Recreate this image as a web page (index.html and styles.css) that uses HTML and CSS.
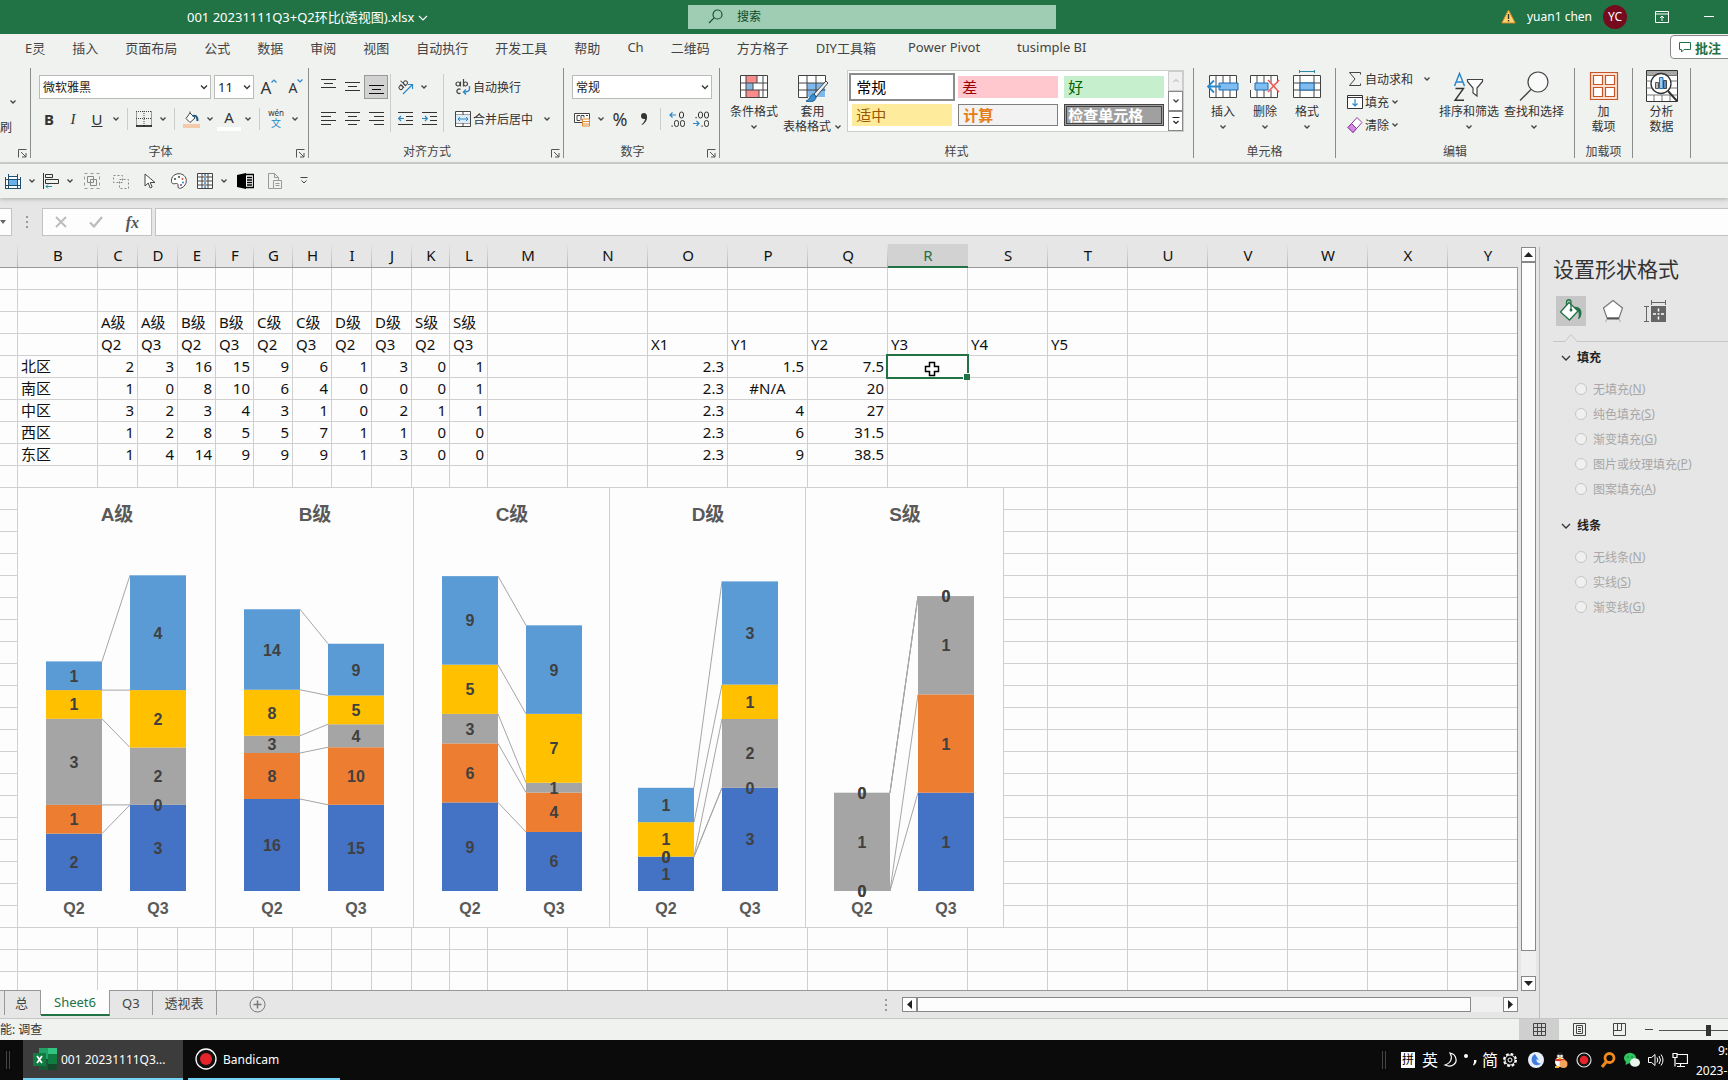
FILE: index.html
```html
<!DOCTYPE html>
<html lang="zh-CN">
<head>
    <meta charset="UTF-8">
    <meta name="viewport" content="width=device-width, initial-scale=1.0">
    <title>001 20231111Q3+Q2环比(透视图).xlsx</title>
    <link rel="stylesheet" href="styles.css">
</head>
<body>

    <svg class="defs" width="0" height="0">
        <symbol id="chev" viewBox="0 0 8 8"><path d="M1.5 2.5L4 5l2.5-2.5" fill="none" stroke="#444" stroke-width="1.3"/></symbol>
        <symbol id="launch" viewBox="0 0 9 9"><path d="M.5 8.500V.5H8.500M3 3l5 5M8 4v4H4" fill="none" stroke="#555"/></symbol>
    </svg>

    <header class="titlebar">
        <button class="doc-name">001 20231111Q3+Q2环比(透视图).xlsx
            <svg width="10" height="8" viewBox="0 0 10 8"><path d="M1 2l4 4 4-4" fill="none" stroke="#fff" stroke-width="1.200"/></svg>
        </button>
        <label class="search">
            <svg width="15" height="15" viewBox="0 0 15 15"><g fill="none" stroke="#14532f" stroke-width="1.200"><circle cx="9.500" cy="5.500" r="4.500"/><path d="M6.300 8.700L1 14"/></g></svg>
            <input type="text" placeholder="搜索" aria-label="搜索">
        </label>
        <div class="account">
            <svg width="15" height="15" viewBox="0 0 15 15"><path d="M7.500 1L14.200 14H.8z" fill="#ffd56b" stroke="#c8882b"/><path d="M7.500 5v5M7.500 11v1.500" stroke="#333" stroke-width="1.400"/></svg>
            <span class="user">yuan1 chen</span>
            <span class="avatar">YC</span>
            <button aria-label="功能区显示选项"><svg width="14" height="12" viewBox="0 0 14 12"><path d="M.5.5h13v11H.5zM.5 3h13M7 10V5M5 7l2-2 2 2" fill="none" stroke="#fff"/></svg></button>
            <button aria-label="最小化"><svg width="10" height="12" viewBox="0 0 10 12"><path d="M0 5.500h10" stroke="#fff"/></svg></button>
        </div>
    </header>

    <nav class="tabs">
        <button>E灵</button>
        <button>插入</button>
        <button>页面布局</button>
        <button>公式</button>
        <button>数据</button>
        <button>审阅</button>
        <button>视图</button>
        <button>自动执行</button>
        <button>开发工具</button>
        <button>帮助</button>
        <button>Ch</button>
        <button>二维码</button>
        <button>方方格子</button>
        <button>DIY工具箱</button>
        <button class="latin">Power Pivot</button>
        <button class="latin">tusimple BI</button>
        <button class="comments">
            <svg width="12" height="12" viewBox="0 0 12 12"><path d="M.5 1.500h11v7H5L2.500 11V8.500h-2z" fill="none" stroke="#217346"/></svg>批注
        </button>
    </nav>

    <section class="ribbon">
        <div class="group clipboard">
            <div class="content">
                <svg class="chev" width="8" height="8"><use href="#chev"/></svg>
                <span>刷</span>
            </div>
            <div class="label">&nbsp;</div>
            <button class="launch" aria-label="剪贴板"><svg width="9" height="9"><use href="#launch"/></svg></button>
        </div>

        <div class="group">
            <div class="content rows">
                <div class="row combos">
                    <select class="font-name" aria-label="字体"><option>微软雅黑</option></select>
                    <select class="font-size" aria-label="字号"><option>11</option></select>
                    <button class="ib grow">A<svg width="6" height="4" viewBox="0 0 6 4"><path d="M.5 3.500L3 1l2.500 2.500" fill="none" stroke="#2b88c8" stroke-width="1.200"/></svg></button>
                    <button class="ib grow small">A<svg width="6" height="4" viewBox="0 0 6 4"><path d="M.5.5L3 3 5.500.5" fill="none" stroke="#2b88c8" stroke-width="1.200"/></svg></button>
                </div>
                <div class="row icons">
                    <button class="ib"><b>B</b></button>
                    <button class="ib"><i>I</i></button>
                    <button class="ib"><u>U</u></button>
                    <button class="cv" aria-label="下划线选项"><svg width="8" height="8"><use href="#chev"/></svg></button>
                    <span class="sep"></span>
                    <button class="ib" aria-label="边框"><svg width="16" height="16" viewBox="0 0 16 16"><path d="M.5.5V15M15.500.5V15M0 .5h16M8 0v15M0 7.500h16" fill="none" stroke="#444" stroke-dasharray="1 1"/><path d="M0 15h16" stroke="#000" stroke-width="1.500"/></svg></button>
                    <button class="cv" aria-label="边框选项"><svg width="8" height="8"><use href="#chev"/></svg></button>
                    <span class="sep"></span>
                    <button class="ib" aria-label="填充颜色"><svg width="17" height="17" viewBox="0 0 17 17"><path d="M0 13h17v4H0z" fill="#f4cbaa"/><path d="M7 2l5 5-5 4.500-4-4zM7 2V.5" fill="#fff" stroke="#444"/><path d="M9.500 5c3-1 5 0 5 5" fill="none" stroke="#1e5c85" stroke-width="2"/></svg></button>
                    <button class="cv" aria-label="填充选项"><svg width="8" height="8"><use href="#chev"/></svg></button>
                    <button class="ib font-color">A</button>
                    <button class="cv" aria-label="字体颜色选项"><svg width="8" height="8"><use href="#chev"/></svg></button>
                    <span class="sep"></span>
                    <button class="ib pinyin"><span>wén</span><span class="wen">文</span></button>
                    <button class="cv" aria-label="拼音选项"><svg width="8" height="8"><use href="#chev"/></svg></button>
                </div>
            </div>
            <div class="label with-launch">字体</div>
            <button class="launch" aria-label="字体设置"><svg width="9" height="9"><use href="#launch"/></svg></button>
        </div>

        <div class="group">
            <div class="content align">
                <div class="rows">
                    <div class="row">
                        <button class="ib" aria-label="顶端对齐"><svg width="15" height="16" viewBox="0 0 15 16"><path d="M0 .5h15M3 4.500h9M0 8.500h15" stroke="#333"/></svg></button>
                        <button class="ib" aria-label="垂直居中"><svg width="15" height="16" viewBox="0 0 15 16"><path d="M0 3.500h15M3 7.500h9M0 11.500h15" stroke="#333"/></svg></button>
                        <button class="ib on" aria-label="底端对齐"><svg width="15" height="16" viewBox="0 0 15 16"><path d="M0 6.500h15M3 10.500h9M0 14.500h15" stroke="#111"/></svg></button>
                    </div>
                    <div class="row">
                        <button class="ib" aria-label="左对齐"><svg width="15" height="14" viewBox="0 0 15 14"><path d="M0 .5h15M0 4.500h10M0 8.500h15M0 12.500h10" stroke="#333"/></svg></button>
                        <button class="ib" aria-label="居中"><svg width="15" height="14" viewBox="0 0 15 14"><path d="M0 .5h15M3 4.500h9M0 8.500h15M3 12.500h9" stroke="#333"/></svg></button>
                        <button class="ib" aria-label="右对齐"><svg width="15" height="14" viewBox="0 0 15 14"><path d="M0 .5h15M5 4.500h10M0 8.500h15M5 12.500h10" stroke="#333"/></svg></button>
                    </div>
                </div>
                <span class="sep"></span>
                <div class="rows">
                    <div class="row">
                        <button class="ib" aria-label="方向"><svg width="17" height="16" viewBox="0 0 17 16"><g fill="none" stroke="#444" transform="rotate(-45 5 6)"><circle cx="2.500" cy="7" r="2"/><path d="M4.500 4.500v5M7 2v7.500"/><circle cx="9" cy="7" r="2"/></g><path d="M6 15L15 6M11 5.500h4.500V10" fill="none" stroke="#2b88c8" stroke-width="1.200"/></svg></button>
                        <button class="cv" aria-label="方向选项"><svg width="8" height="8"><use href="#chev"/></svg></button>
                    </div>
                    <div class="row">
                        <button class="ib" aria-label="减少缩进量"><svg width="15" height="14" viewBox="0 0 15 14"><path d="M0 .5h15M8 4.500h7M8 8.500h7M0 12.500h15" stroke="#333"/><path d="M6 6.500H1M3 4L.7 6.500 3 9" fill="none" stroke="#2b88c8" stroke-width="1.200"/></svg></button>
                        <button class="ib" aria-label="增加缩进量"><svg width="15" height="14" viewBox="0 0 15 14"><path d="M0 .5h15M8 4.500h7M8 8.500h7M0 12.500h15" stroke="#333"/><path d="M0 6.500h5M3 4l2.300 2.500L3 9" fill="none" stroke="#2b88c8" stroke-width="1.200"/></svg></button>
                    </div>
                </div>
                <span class="sep"></span>
                <div class="rows wrap-col">
                    <button class="row text-btn"><svg width="16" height="16" viewBox="0 0 16 16"><g fill="none" stroke="#444" stroke-width="1.200"><circle cx="3" cy="5" r="2"/><path d="M5.500 2.500v5M8.500 0v7.500"/><circle cx="10.500" cy="5" r="2"/><path d="M5.500 10.500a2.200 2.200 0 1 0 0 3.500"/></g><path d="M14.500 7v3c0 2-1 3-6 3M11 10.500L8.500 13l2.500 2.500" fill="none" stroke="#2b88c8" stroke-width="1.400"/></svg>自动换行</button>
                    <button class="row text-btn"><svg width="16" height="16" viewBox="0 0 16 16"><path d="M.5.5h15v15H.5zM.5 4h15M.5 12h15M8 .5V4M8 12v3.500" fill="#fff" stroke="#444"/><path d="M1 4h14v8H1z" fill="#dcecf8"/><path d="M3 8h10M5 6L3 8l2 2M11 6l2 2-2 2" fill="none" stroke="#2b88c8"/></svg>合并后居中<svg class="far" width="8" height="8"><use href="#chev"/></svg></button>
                </div>
            </div>
            <div class="label with-launch">对齐方式</div>
            <button class="launch" aria-label="对齐设置"><svg width="9" height="9"><use href="#launch"/></svg></button>
        </div>

        <div class="group">
            <div class="content rows">
                <div class="row combos">
                    <select class="number-format" aria-label="数字格式"><option>常规</option></select>
                </div>
                <div class="row icons">
                    <button class="ib" aria-label="会计数字格式"><svg width="17" height="16" viewBox="0 0 17 16"><path d="M.5 2.500h15v9H.5z" fill="#fff" stroke="#444"/><path d="M6 4.500H3v5h3M7 9.500v-5h3v2M12 4.500h2" fill="none" stroke="#444"/><path d="M8.500 8h7v7h-7z" fill="#fff" stroke="#e08a2c"/><path d="M8.500 10.500h7M8.500 13h7" stroke="#e08a2c"/></svg></button>
                    <button class="cv" aria-label="会计选项"><svg width="8" height="8"><use href="#chev"/></svg></button>
                    <button class="ib percent">%</button>
                    <button class="ib" aria-label="千位分隔样式"><svg width="8" height="14" viewBox="0 0 8 14"><path d="M4 1a3 3 0 1 0 0 6c.5 0 .9 0 1.200-.2C4.800 9 3.500 11 1.500 12.500L2 13C5.500 11 7.500 8 7 4 6.800 2 5.500 1 4 1z" fill="#333"/></svg></button>
                    <span class="sep"></span>
                    <button class="ib" aria-label="增加小数位数"><svg width="16" height="16" viewBox="0 0 16 16"><path d="M7 4H1M3.500 1.500L1 4l2.500 2.500" fill="none" stroke="#2b88c8" stroke-width="1.200"/><g fill="none" stroke="#333"><rect x="10.500" y="1" width="4" height="6" rx="2"/><rect x="5.500" y="9.500" width="4" height="6" rx="2"/><rect x="11.500" y="9.500" width="4" height="6" rx="2"/></g><path d="M2.500 14.500h1.200v1.200H2.500z" fill="#333"/></svg></button>
                    <button class="ib" aria-label="减少小数位数"><svg width="16" height="16" viewBox="0 0 16 16"><path d="M0 12.500h6M3.500 10L6 12.500 3.500 15" fill="none" stroke="#2b88c8" stroke-width="1.200"/><g fill="none" stroke="#333"><rect x="5.500" y="1" width="4" height="6" rx="2"/><rect x="11.500" y="1" width="4" height="6" rx="2"/><rect x="11.500" y="9.500" width="4" height="6" rx="2"/></g><path d="M2.500 6h1.200v1.200H2.500zM8.500 14.500h1.200v1.200H8.500z" fill="#333"/></svg></button>
                </div>
            </div>
            <div class="label with-launch">数字</div>
            <button class="launch" aria-label="数字设置"><svg width="9" height="9"><use href="#launch"/></svg></button>
        </div>

        <div class="group">
            <div class="content styles">
                <button class="big">
                    <svg width="32" height="32" viewBox="0 0 32 32"><path d="M2.500 5.500h27v22h-27z" fill="#fff"/><path d="M8 6h11v7H8zM8 20h13v7H8z" fill="#f98b8b"/><path d="M8 13h7v7H8z" fill="#87b4df"/><path d="M2.500 5.500h27v22h-27zM2.500 13h27M2.500 20h27M8 5.500v22M19 5.500V13M15 13v7M21 20v7.500M25 5.500v22" fill="none" stroke="#444"/></svg>
                    <span>条件格式</span>
                    <svg width="8" height="8"><use href="#chev"/></svg>
                </button>
                <button class="big">
                    <svg width="32" height="32" viewBox="0 0 32 32"><path d="M1.500 5.500h27v22h-27z" fill="#fff"/><path d="M10 13h18v14H10z" fill="#7fb8ec"/><path d="M28.500 12V5.500h-27v22H11M1.500 13h27M1.500 20h27M10 5.500v22M19 5.500v22" fill="none" stroke="#444"/><path d="M29 11L17 24l2 3 12-14z" fill="#eee" stroke="#444"/><path d="M17 24c-4 0-3 5-8 7 5 2 10 0 10-4z" fill="#3c8ed0" stroke="#1e5c85"/></svg>
                    <span>套用</span>
                    <span>表格格式 <svg width="8" height="8"><use href="#chev"/></svg></span>
                </button>
                <div class="gallery">
                    <div class="swatches">
                        <button class="normal">常规</button>
                        <button class="bad">差</button>
                        <button class="good">好</button>
                        <button class="neutral">适中</button>
                        <button class="calc">计算</button>
                        <button class="check">检查单元格</button>
                    </div>
                    <div class="scroller">
                        <button class="off" aria-label="上一行"><svg width="8" height="8" viewBox="0 0 8 8"><path d="M1.500 5L4 2.500 6.500 5" fill="none" stroke="#aaa"/></svg></button>
                        <button aria-label="下一行"><svg width="8" height="8"><use href="#chev"/></svg></button>
                        <button aria-label="其他"><svg width="8" height="10" viewBox="0 0 8 10"><path d="M.5 1.500h7M1.500 5L4 7.500 6.500 5" fill="none" stroke="#222" stroke-width="1.200"/></svg></button>
                    </div>
                </div>
            </div>
            <div class="label">样式</div>
        </div>

        <div class="group">
            <div class="content cells">
                <button class="big">
                    <svg width="32" height="32" viewBox="0 0 32 32"><path d="M2.500 5.500h27v22h-27z" fill="#fff"/><path d="M2.500 5.500h27v22h-27zM9 5.500v22M16 5.500v22M23 5.500v22" fill="none" stroke="#444"/><path d="M12 13h19v7H12z" fill="#7fbcf0" stroke="#1c6db5"/><path d="M14 16.500H1M7 10.500l-6 6 6 6" fill="none" stroke="#2b88c8" stroke-width="1.800"/></svg>
                    <span>插入</span>
                    <svg width="8" height="8"><use href="#chev"/></svg>
                </button>
                <button class="big">
                    <svg width="32" height="32" viewBox="0 0 32 32"><path d="M1.500 5.500h27v22h-27z" fill="#fff"/><path d="M1.500 5.500h27v22h-27zM8 5.500v22M15 5.500v22M22 5.500v22" fill="none" stroke="#444"/><path d="M1 13h28v7H1z" fill="#f0f2ef"/><path d="M6 13h13v7H6z" fill="#7fbcf0" stroke="#1c6db5"/><path d="M19 10l11 12M30 10L19 22" stroke="#f05a5a" stroke-width="1.500"/></svg>
                    <span>删除</span>
                    <svg width="8" height="8"><use href="#chev"/></svg>
                </button>
                <button class="big">
                    <svg width="32" height="32" viewBox="0 0 32 32"><path d="M2.500 5.500h27v22h-27z" fill="#fff"/><path d="M2.500 5.500h27v22h-27zM2.500 13h27M2.500 20h27M9 5.500v22M23 5.500v22" fill="none" stroke="#444"/><path d="M9 13h14v7H9z" fill="#7fbcf0" stroke="#1c6db5"/><path d="M8 1.500h16M8.500 0v3M23.500 0v3" stroke="#2b88a8"/></svg>
                    <span>格式</span>
                    <svg width="8" height="8"><use href="#chev"/></svg>
                </button>
            </div>
            <div class="label">单元格</div>
        </div>

        <div class="group">
            <div class="content edit">
                <div class="stack">
                    <button class="text-btn"><svg width="16" height="16" viewBox="0 0 16 16"><path d="M13.500 3.500V1.500H2.500L8 8l-5.500 6.500h11v-2" fill="none" stroke="#444"/></svg>自动求和<svg class="far" width="8" height="8"><use href="#chev"/></svg></button>
                    <button class="text-btn"><svg width="16" height="16" viewBox="0 0 16 16"><path d="M.5 1.500h15v13H.5z" fill="#fff" stroke="#333"/><path d="M.5 3.500h15" stroke="#333"/><path d="M8 5v7M5.500 9.500L8 12l2.500-2.500" fill="none" stroke="#2b88c8" stroke-width="1.200"/></svg>填充<svg width="8" height="8"><use href="#chev"/></svg></button>
                    <button class="text-btn"><svg width="16" height="16" viewBox="0 0 16 16"><path d="M10 .5L15 5.500 6 15.500 1 10.500z" fill="#fff" stroke="#8d3a9c"/><path d="M4.500 6.500L9.500 11.500 6 15.500 1 10.500z" fill="#d48ade" stroke="#8d3a9c"/></svg>清除<svg width="8" height="8"><use href="#chev"/></svg></button>
                </div>
                <button class="big">
                    <svg width="32" height="32" viewBox="0 0 32 32"><path d="M1.500 16L6.500 3.500 11.500 16M3 12h7" fill="none" stroke="#2b88c8" stroke-width="1.500"/><path d="M2.500 18.500h8L2 30.300h9" fill="none" stroke="#333" stroke-width="1.400"/><path d="M14.500 9.500h15v2L24 18v8l-4-3v-5l-5.500-6.500z" fill="#fff" stroke="#444" stroke-width="1.200"/></svg>
                    <span>排序和筛选</span>
                    <svg width="8" height="8"><use href="#chev"/></svg>
                </button>
                <button class="big">
                    <svg width="32" height="32" viewBox="0 0 32 32"><circle cx="20" cy="12" r="10" fill="#fafafa" stroke="#444" stroke-width="1.200"/><path d="M13 19.500L2 30.500" stroke="#444" stroke-width="1.300"/></svg>
                    <span>查找和选择</span>
                    <svg width="8" height="8"><use href="#chev"/></svg>
                </button>
            </div>
            <div class="label">编辑</div>
        </div>

        <div class="group">
            <div class="content single">
                <button class="big">
                    <svg width="32" height="32" viewBox="0 0 32 32"><path d="M2.500 2.500h27v27h-27z" fill="#fbe0d0" stroke="#c4562a" stroke-width="1.200"/><path d="M5.500 5.500h9v9h-9zM17.500 5.500h9v9h-9zM5.500 17.500h9v9h-9zM17.500 17.500h9v9h-9z" fill="#fff" stroke="#c4562a" stroke-width="1.200"/></svg>
                    <span>加</span>
                    <span>载项</span>
                </button>
            </div>
            <div class="label">加载项</div>
        </div>

        <div class="group">
            <div class="content single">
                <button class="big">
                    <svg width="32" height="32" viewBox="0 0 32 32"><path d="M.5.5h31v31H.5z" fill="#fff" stroke="#333"/><path d="M1 1h30v4H1z" fill="#a8a8a8"/><path d="M.5 5.500h31M.5 11h31M.5 18h31M.5 25h31M8 25v6M16 25v6M24 25v6" stroke="#777"/><circle cx="15" cy="13.500" r="10" fill="#fff" stroke="#333" stroke-width="1.300"/><path d="M22 21l9 10" stroke="#333" stroke-width="2"/><path d="M9.500 12.500h3v6h-3z" fill="#bbb" stroke="#555"/><path d="M13.500 7.500h3.500v11h-3.500z" fill="#9cc8ee" stroke="#1c6db5"/><path d="M17.500 10.500h3v8h-3z" fill="#5a8fc0" stroke="#444"/></svg>
                    <span>分析</span>
                    <span>数据</span>
                </button>
            </div>
            <div class="label">&nbsp;</div>
        </div>
    </section>

    <div class="quickbar">
        <button class="ib" aria-label="冻结窗格"><svg width="16" height="16" viewBox="0 0 16 16"><path d="M.5 3.500h15v12H.5z" fill="#fff"/><path d="M4 7h8v5H4z" fill="#6bb0ee"/><path d="M3.500 1v15M12.500 1v15M0 6.500h16M0 12.500h16M.5 4v12M15.500 4v12M3 3.500h10M0 15.500h16" fill="none" stroke="#1e4f70"/></svg></button>
        <button class="cv" aria-label="冻结选项"><svg width="8" height="8"><use href="#chev"/></svg></button>
        <button class="ib" aria-label="对齐对象"><svg width="16" height="16" viewBox="0 0 16 16"><path d="M.5 0v16M2.500 1.500h7v3h-7zM2.500 6.500h13v4h-13z" fill="none" stroke="#333"/><path d="M9 13.500H3M5 11.500l-2 2 2 2" fill="none" stroke="#2b88a8"/></svg></button>
        <button class="cv" aria-label="对齐选项"><svg width="8" height="8"><use href="#chev"/></svg></button>
        <button class="ib wide" aria-label="组合"><svg width="16" height="16" viewBox="0 0 16 16"><path d="M.5.500h15v15H.5z" fill="none" stroke="#999" stroke-dasharray="3 3"/><path d="M3.500 3.500h6v6h-6zM6.500 6.500h6v6h-6z" fill="none" stroke="#888"/></svg></button>
        <button class="ib wide" aria-label="取消组合"><svg width="16" height="16" viewBox="0 0 16 16"><path d="M.5 2.500h9v7h-9zM6.500 6.500h9v9h-9z" fill="none" stroke="#888" stroke-dasharray="2 2"/></svg></button>
        <button class="ib wide" aria-label="选择对象"><svg width="12" height="16" viewBox="0 0 12 16"><path d="M1 1v12l3.200-3 2 5 2-1-2-4.500H11z" fill="#fff" stroke="#444"/></svg></button>
        <button class="ib wide" aria-label="主题颜色"><svg width="17" height="16" viewBox="0 0 17 16"><path d="M9 .7c4 0 7.300 3 7.300 7S13 15.300 9.500 15.300c-2 0-1.200-2-1.500-3.500C7.500 9 5 11.500 2.500 10.500.5 9.500.700.7 9 .7z" fill="#fff" stroke="#444"/><g fill="#444"><circle cx="5" cy="6" r="1"/><circle cx="9" cy="4" r="1" /><circle cx="12.500" cy="6" r="1" fill="#c4562a"/><circle cx="13" cy="9.500" r="1" fill="#2b88c8"/><circle cx="11" cy="12" r="1" fill="#8d3a9c"/></g></svg></button>
        <button class="ib" aria-label="表格"><svg width="16" height="16" viewBox="0 0 16 16"><path d="M.5.500h15v15H.5zM.5 4h15M.5 8h15M.5 12h15M5 .5v15M11 .5v15" fill="#fff" stroke="#444"/><path d="M7 2h2M7 6h2M7 10h2M7 14h2" stroke="#2b88c8" stroke-width="1.500"/></svg></button>
        <button class="cv" aria-label="表格选项"><svg width="8" height="8"><use href="#chev"/></svg></button>
        <button class="ib wide" aria-label="照相机"><svg width="17" height="16" viewBox="0 0 17 16"><path d="M9 1h8v14H9z" fill="#fff"/><path d="M0 2l9-2v16l-9-2z"/><path d="M9 1.500h7.500v13H9M10 4.500h5M10 7h5M10 9.500h5M10 12h5" fill="none" stroke="#000" stroke-width="1.300"/></svg></button>
        <button class="ib wide" aria-label="粘贴"><svg width="16" height="16" viewBox="0 0 16 16"><path d="M6 15.500H1.500V.5h6l4 4V7M7.500.5v4h4M6.500 7.500h8v8h-8zM8.500 10.500h4M8.500 12.500h4" fill="none" stroke="#999"/></svg></button>
        <button class="ib wide" aria-label="自定义工具栏"><svg width="8" height="10" viewBox="0 0 8 10"><path d="M.5 1.500h7M1.500 4.500L4 7l2.500-2.500" fill="none" stroke="#444"/></svg></button>
    </div>

    <div class="formula-bar">
        <button class="name-box" aria-label="名称框"><svg width="6" height="4" viewBox="0 0 6 4"><path d="M0 0h6L3 4z" fill="#666"/></svg></button>
        <span class="grip"></span>
        <div class="fx">
            <svg width="12" height="12" viewBox="0 0 12 12"><path d="M1 1l10 10M11 1L1 11" stroke="#bbb" stroke-width="1.800"/></svg>
            <svg width="14" height="12" viewBox="0 0 14 12"><path d="M1 6.500L5 10.500 13 1" fill="none" stroke="#bbb" stroke-width="2.200"/></svg>
            <button><i>fx</i></button>
        </div>
        <input type="text" aria-label="编辑栏">
    </div>

    <main class="work">
        <div class="book">
            <div class="view">
                <div class="sheet">
                    <table id="grid"></table>
                    <div class="charts" id="charts"></div>
                </div>
                <div class="vscroll">
                    <button aria-label="向上滚动"><svg width="9" height="5" viewBox="0 0 9 5"><path d="M4.500 0L9 5H0z" fill="#222"/></svg></button>
                    <div class="thumb"></div>
                    <div class="track"></div>
                    <button aria-label="向下滚动"><svg width="9" height="5" viewBox="0 0 9 5"><path d="M4.500 5L9 0H0z" fill="#222"/></svg></button>
                </div>
            </div>
            <div class="sheet-bar">
                <button class="st first">总</button>
                <button class="st active">Sheet6</button>
                <button class="st">Q3</button>
                <button class="st">透视表</button>
                <button class="add" aria-label="新工作表"><svg width="17" height="17" viewBox="0 0 17 17"><g fill="none" stroke="#777"><circle cx="8.500" cy="8.500" r="7.500"/><path d="M8.500 4.500v8M4.500 8.500h8" stroke-width="1.500"/></g></svg></button>
                <span class="grip"></span>
                <div class="hscroll">
                    <button aria-label="向左滚动"><svg width="5" height="9" viewBox="0 0 5 9"><path d="M0 4.500L5 0v9z" fill="#222"/></svg></button>
                    <div class="thumb"></div>
                    <div class="track"></div>
                    <button aria-label="向右滚动"><svg width="5" height="9" viewBox="0 0 5 9"><path d="M5 4.500L0 0v9z" fill="#222"/></svg></button>
                </div>
            </div>
        </div>

        <aside class="pane">
            <h2>设置形状格式</h2>
            <div class="pane-tabs">
                <button class="on" aria-label="填充与线条"><svg width="24" height="24" viewBox="0 0 24 24"><path d="M10 3.500l9 8.500-8.500 9L1.500 13z" fill="#fff" stroke="#217346" stroke-width="1.300"/><path d="M7.500 6V3c0-3 4.500-3 4.500 0v7" fill="none" stroke="#217346" stroke-width="1.300"/><circle cx="12" cy="11" r="1.500" fill="#217346"/><path d="M15 8c5-1 9 3 7 9-.5 2-2 3-3 3 1-3 1-6 0-8z" fill="#217346"/></svg></button>
                <button aria-label="效果"><svg width="22" height="24" viewBox="0 0 22 24"><path d="M11 1.500l9.500 7.500L17 19H5L1.500 9z" fill="#fff" stroke="#777" stroke-width="1.200"/><path d="M5 19.500h12" stroke="#555" stroke-width="2"/><path d="M5 20l-1.500 3M17 20l1.500 3" stroke="#aaa"/></svg></button>
                <button aria-label="大小与属性"><svg width="22" height="22" viewBox="0 0 22 22"><path d="M7 6h15v16H7z" fill="#666"/><path d="M14.500 8.500v3M14.500 16.500v3M9 14h3M17 14h3M13.500 14h2" stroke="#fff" stroke-width="1.500"/><path d="M7.500 0v5M21.500 0v5M7.500 2.500h14M0 6.500h5M0 21.500h5M2.500 6.500v15" stroke="#666"/></svg></button>
            </div>
            <svg class="notch" width="100%" height="10"><path d="M0 9.500h12l6-7 6 7h400" fill="none" stroke="#c6c6c6"/></svg>
            <fieldset>
                <legend><svg width="10" height="8" viewBox="0 0 10 8"><path d="M1 2l4 4 4-4" fill="none" stroke="#333" stroke-width="1.300"/></svg>填充</legend>
                <label><input type="radio" name="fill" disabled>无填充(<u>N</u>)</label>
                <label><input type="radio" name="fill" disabled>纯色填充(<u>S</u>)</label>
                <label><input type="radio" name="fill" disabled>渐变填充(<u>G</u>)</label>
                <label><input type="radio" name="fill" disabled>图片或纹理填充(<u>P</u>)</label>
                <label><input type="radio" name="fill" disabled>图案填充(<u>A</u>)</label>
            </fieldset>
            <fieldset>
                <legend><svg width="10" height="8" viewBox="0 0 10 8"><path d="M1 2l4 4 4-4" fill="none" stroke="#333" stroke-width="1.300"/></svg>线条</legend>
                <label><input type="radio" name="line" disabled>无线条(<u>N</u>)</label>
                <label><input type="radio" name="line" disabled>实线(<u>S</u>)</label>
                <label><input type="radio" name="line" disabled>渐变线(<u>G</u>)</label>
            </fieldset>
        </aside>
    </main>

    <footer class="status">
        <span class="access">能: 调查</span>
        <button class="on" aria-label="普通"><svg width="13" height="13" viewBox="0 0 13 13"><path d="M.5.500h12v12H.5zM.5 4.500h12M.5 8.500h12M4.500.5v12M8.500.5v12" fill="none" stroke="#444"/></svg></button>
        <button aria-label="页面布局"><svg width="13" height="13" viewBox="0 0 13 13"><path d="M.5.500h12v12H.5zM3.500 2.500h6v8h-6zM5 4.500h3M5 6.500h3M5 8.500h3" fill="none" stroke="#444"/></svg></button>
        <button aria-label="分页预览"><svg width="13" height="13" viewBox="0 0 13 13"><path d="M.5.500h12v12H.5zM.5 7.500h8v-7M4.500.5v7" fill="none" stroke="#444"/></svg></button>
        <div class="zoom">
            <svg width="90" height="14" viewBox="0 0 90 14"><path d="M6 6.500h8" stroke="#444"/><path d="M20 7.500h70" stroke="#555"/><path d="M67 2h5v11h-5z" fill="#333"/></svg>
        </div>
    </footer>

    <div class="taskbar">
        <span class="bars"></span>
        <button class="app active">
            <svg width="24" height="22" viewBox="0 0 24 22"><path d="M6 0h9v11H6z" fill="#21a366"/><path d="M15 0h9v6h-9z" fill="#33c481"/><path d="M15 6h9v10h-9z" fill="#107c41"/><path d="M6 11h9v11H6z" fill="#185c37"/><path d="M15 16h9v6h-9z" fill="#134a2c"/><path d="M0 5h13v13H0z" fill="#107c41"/><path d="M4 8l5 7M9 8l-5 7" stroke="#fff" stroke-width="1.800"/></svg>
            001 20231111Q3...
        </button>
        <button class="app">
            <svg width="22" height="22" viewBox="0 0 22 22"><circle cx="11" cy="11" r="10" fill="#111" stroke="#fff" stroke-width="1.300"/><circle cx="11" cy="11" r="6" fill="#e5232b"/></svg>
            Bandicam
        </button>
        <div class="tray">
            <div class="input-tools">
                <span class="bars"></span>
                <span class="ime box">拼</span>
                <span class="ime">英</span>
                <svg viewBox="0 0 16 16"><path d="M8 1c3 5 1 10-5 12 6 3 12-1 11-6-.5-3-3-5.500-6-6z" fill="none" stroke="#fff" stroke-width="1.200"/></svg>
                <svg viewBox="0 0 16 16"><circle cx="4" cy="4" r="2" fill="#fff"/><path d="M12 8h2.500c0 3-1 4-3 5.500L11 13c1-1.500 1-3 1-5z" fill="#fff"/></svg>
                <span class="ime">简</span>
                <svg viewBox="0 0 16 16"><circle cx="8" cy="8" r="6" fill="none" stroke="#fff" stroke-width="2" stroke-dasharray="2.700 2"/><circle cx="8" cy="8" r="5" fill="#0b0b0b" stroke="#fff"/><circle cx="8" cy="8" r="2" fill="none" stroke="#fff"/></svg>
            </div>
            <svg viewBox="0 0 16 16"><circle cx="8" cy="8" r="8" fill="#e9f0fb"/><path d="M7 2C3 4 3 9 5 11.500c2 2.500 6 2 8 0-3 0-5-2-4.500-4.500L11 8.500z" fill="#3f7fe0"/></svg>
            <svg viewBox="0 0 16 16"><ellipse cx="8" cy="5" rx="4" ry="4.500" fill="#222"/><ellipse cx="8" cy="10" rx="5" ry="5" fill="#fff"/><circle cx="6.500" cy="4" r="1.300" fill="#fff"/><circle cx="9.500" cy="4" r="1.300" fill="#fff"/><path d="M3 7h10v2.500L3 9z" fill="#d93a2b"/><path d="M5 5.500h6L8 7.500z" fill="#f6b32a"/><circle cx="11.500" cy="12" r="4" fill="#f0a45c"/><path d="M3 14h4v2H3z" fill="#f6b32a"/></svg>
            <svg viewBox="0 0 16 16"><circle cx="8" cy="8" r="7" fill="#111" stroke="#ddd" stroke-width="1.200"/><circle cx="8" cy="8" r="4.300" fill="#e5232b"/></svg>
            <svg viewBox="0 0 16 16"><circle cx="9.500" cy="6" r="4.500" fill="none" stroke="#f08a1c" stroke-width="2.800"/><path d="M6.500 9.500L2 15" stroke="#f08a1c" stroke-width="3"/></svg>
            <svg viewBox="0 0 16 16"><ellipse cx="6" cy="6" rx="6" ry="5.200" fill="#2fc45e"/><path d="M2 9l-.5 4 4-2z" fill="#2fc45e"/><ellipse cx="11" cy="10.500" rx="5" ry="4.300" fill="#e8f5ea"/><g fill="#1c6d38"><circle cx="4" cy="5" r=".8"/><circle cx="8" cy="5" r=".8"/></g></svg>
            <svg viewBox="0 0 16 16"><path d="M.5 5.500h3L7 2.500v11l-3.500-3h-3zM9 5.500q1.500 2.500 0 5M11 4q3 4 0 8M13 2.500q4 5.500 0 11" fill="none" stroke="#fff"/></svg>
            <svg viewBox="0 0 16 16"><path d="M5 2.500h10.500v9H4M1 1.500h4v4H1zM3 5.500v9M8.500 11.500v3M5 14.500h8" fill="none" stroke="#fff" stroke-width="1.200"/></svg>
            <div class="clock"><span>9:</span><span>2023-</span></div>
        </div>
    </div>

    <script src="script.js"></script>
</body>
</html>
```
FILE: styles.css
```css
* {
    margin: 0;
    padding: 0;
    box-sizing: border-box;
}

body {
    font-family: "Noto Sans", "Noto Sans CJK SC", sans-serif;
    font-size: 12px;
    color: #333;
    background: #e6e6e6;
    height: 100vh;
    display: flex;
    flex-direction: column;
    overflow: hidden;
}

button {
    font: inherit;
    color: inherit;
    background: none;
    border: none;
    white-space: nowrap;
}

svg {
    flex: none;
}

.defs {
    position: absolute;
}

/* title bar */
.titlebar {
    flex: none;
    height: 34px;
    padding-bottom: 1px;
    background: #217346;
    color: #fff;
    display: grid;
    grid-template-columns: 688px minmax(200px, 368px) 1fr;
    align-items: center;
}

.doc-name {
    justify-self: start;
    margin-left: 187px;
    font-size: 13px;
    line-height: 20px;
}

.search {
    height: 24px;
    background: #9fcdb3;
    display: flex;
    align-items: center;
    gap: 14px;
    padding-left: 20px;
}

.search input {
    flex: 1;
    min-width: 0;
    background: none;
    border: none;
    font: inherit;
}

.search input::placeholder {
    color: #0e4a2a;
    opacity: 1;
}

.account {
    display: flex;
    align-items: center;
    justify-content: flex-end;
    padding-right: 14px;
    gap: 11px;
}

.avatar {
    width: 24px;
    height: 24px;
    line-height: 24px;
    border-radius: 50%;
    background: #750b1c;
    text-align: center;
}

.account button {
    display: flex;
    margin-left: 17px;
}

.account button:last-child {
    margin-left: 24px;
}

/* ribbon tabs */
.tabs {
    flex: none;
    height: 28px;
    background: #f0f2ef;
    display: flex;
    align-items: center;
    gap: 1px;
    padding: 0 0 2px 12px;
    font-size: 13px;
    color: #444;
}

.tabs button {
    padding: 0 13px;
}

.tabs .latin {
    padding: 0 18px;
}

.tabs .comments {
    margin-left: auto;
    margin-right: -8px;
    height: 24px;
    padding: 0 14px 0 8px;
    display: flex;
    align-items: center;
    gap: 4px;
    background: #fff;
    border: 1px solid #888;
    border-radius: 4px;
    color: #217346;
    font-weight: bold;
}

/* ribbon */
.ribbon {
    flex: none;
    display: grid;
    grid-template-columns: 31px 278px 255px 156px 474px 142px 239px 58px 58px;
    background: #f0f2ef;
    padding: 6px 0 4px;
    border-bottom: 2px solid #cfcfcf;
}

.group {
    position: relative;
    border-right: 1px solid #8c8c8c;
    height: 90px;
}

.content {
    height: 76px;
}

.label {
    line-height: 16px;
    text-align: center;
    color: #444;
}

.with-launch {
    padding-right: 18px;
}

.launch {
    position: absolute;
    right: 3px;
    bottom: 0;
    display: flex;
}

.clipboard .content {
    display: flex;
    flex-direction: column;
    justify-content: space-between;
    padding: 30px 0 8px;
}

.clipboard .chev {
    margin-left: 9px;
}

.rows {
    display: flex;
    flex-direction: column;
    gap: 8px;
    padding-top: 7px;
}

.row {
    display: flex;
    align-items: center;
    height: 24px;
}

.combos {
    padding-left: 8px;
    gap: 3px;
}

.icons {
    padding-left: 6px;
}

select {
    appearance: none;
    height: 24px;
    padding: 0 3px;
    border: 1px solid #bbb;
    font: inherit;
    color: #222;
    background: #fff url("data:image/svg+xml,%3Csvg xmlns='http://www.w3.org/2000/svg' width='8' height='8'%3E%3Cpath d='M1 2.5L4 5.500l3-3' fill='none' stroke='%23333' stroke-width='1.300'/%3E%3C/svg%3E") no-repeat right 2px center;
}

.font-name {
    width: 172px;
}

.font-size {
    width: 40px;
    font-size: 13px;
}

.number-format {
    width: 140px;
}

.ib {
    width: 24px;
    height: 24px;
    display: flex;
    align-items: center;
    justify-content: center;
    font-size: 15px;
}

.ib.on {
    background: #d2d2d2;
    border: 1px solid #999;
}

.ib.wide {
    width: 29px;
}

.cv {
    width: 14px;
    height: 24px;
    display: flex;
    align-items: center;
    justify-content: center;
}

.sep {
    width: 1px;
    height: 22px;
    margin: 0 4px;
    background: #ccc;
}

.ib i,
.fx i {
    font-family: "Liberation Serif", serif;
}

.grow {
    font-size: 17px;
}

.grow svg {
    align-self: flex-start;
    margin-top: 4px;
}

.grow.small {
    font-size: 14px;
}

.font-color {
    border-bottom: 4px solid #fff;
    line-height: 16px;
}

.pinyin {
    flex-direction: column;
    font-size: 8px;
    line-height: 9px;
}

.wen {
    font-size: 10px;
    line-height: 13px;
    color: #2b88c8;
}

.percent {
    font-size: 18px;
}

.align {
    display: flex;
    padding-left: 7px;
}

.align > .sep {
    height: 58px;
    margin: 6px 2px 0;
}

.wrap-col {
    padding-left: 9px;
}

.text-btn {
    display: flex;
    align-items: center;
    gap: 2px;
}

.text-btn .far {
    margin-left: 8px;
}

.big {
    display: flex;
    flex-direction: column;
    align-items: center;
    min-width: 42px;
    padding-top: 2px;
    line-height: 15px;
}

.big > svg:first-child {
    margin-bottom: 2px;
}

.big > svg:last-child {
    margin-top: 4px;
}

.styles {
    display: flex;
    padding-left: 10px;
}

.styles .big:nth-child(2) {
    margin: 0 5px;
}

.gallery {
    display: flex;
    height: 62px;
    margin-top: 2px;
    background: #fff;
    border: 1px solid #ccc;
}

.swatches {
    display: grid;
    grid-template-columns: repeat(3, 100px);
    grid-template-rows: 22px 22px;
    gap: 6px;
    padding: 5px 4px;
}

.swatches button {
    text-align: left;
    padding-left: 4px;
    font-size: 15px;
    line-height: 18px;
}

.swatches .normal {
    color: #000;
    outline: 2px solid #8c8c8c;
    outline-offset: 1px;
}

.bad {
    background: #ffc7ce;
    color: #9c0006;
}

.good {
    background: #c6efce;
    color: #006100;
}

.neutral {
    background: #ffeb9c;
    color: #9c5700;
}

.swatches .calc {
    background: #f2f2f2;
    border: 1px solid #7f7f7f;
    color: #e67e17;
    font-weight: bold;
}

.swatches .check {
    background: #a0a0a0;
    border: 3px double #444;
    color: #fff;
    font-weight: bold;
    padding-left: 1px;
    line-height: 14px;
}

.scroller {
    display: flex;
    flex-direction: column;
    width: 15px;
}

.scroller button {
    flex: 1;
    display: flex;
    align-items: center;
    justify-content: center;
    border: 1px solid #888;
}

.scroller .off {
    border-color: #ccc;
    background: #f0f0f0;
}

.cells {
    display: flex;
    padding-left: 8px;
}

.edit {
    display: flex;
}

.stack {
    width: 103px;
    padding-left: 11px;
    display: flex;
    flex-direction: column;
    gap: 1px;
}

.stack button {
    height: 22px;
}

.edit .big {
    margin-right: 5px;
}

.single {
    display: flex;
    justify-content: center;
}

/* quick access bar */
.quickbar {
    flex: none;
    height: 34px;
    display: flex;
    align-items: center;
    padding-left: 1px;
    background: #f0f2ef;
    box-shadow: 0 1px 4px #aaa;
}

/* formula bar */
.formula-bar {
    flex: none;
    height: 28px;
    margin-top: 10px;
    display: flex;
}

.formula-bar input,
.fx,
.name-box {
    background: #fdfdfd;
    border: 1px solid #c3c3c3;
}

.name-box {
    width: 12px;
    border-left: none;
    display: flex;
    align-items: center;
}

.grip {
    width: 2px;
    height: 12px;
    align-self: center;
    margin: 0 14px;
    background: repeating-linear-gradient(#999 0 2px, transparent 2px 5px);
}

.fx {
    width: 110px;
    display: flex;
    align-items: center;
    justify-content: space-between;
    padding: 0 12px;
}

.fx button {
    font-size: 16px;
    font-weight: bold;
    line-height: 20px;
    color: #555;
}

.formula-bar input {
    flex: 1;
    margin-left: 3px;
    border-right: none;
}

/* workbook */
.work {
    flex: 1;
    min-height: 0;
    display: flex;
}

.book {
    flex: 1;
    min-width: 0;
    display: flex;
    flex-direction: column;
}

.view {
    flex: 1;
    min-height: 0;
    display: flex;
    gap: 3px;
    padding-right: 3px;
}

.sheet {
    flex: 1;
    min-width: 0;
    margin-top: 8px;
    position: relative;
    overflow: hidden;
    border-bottom: 1px solid #999;
}

/* right edge starts under the column letters */
.sheet::after {
    content: "";
    position: absolute;
    top: 24px;
    right: 0;
    bottom: 0;
    width: 1px;
    background: #999;
}

#grid {
    table-layout: fixed;
    width: 100%;
    border-collapse: separate;
    border-spacing: 0;
    font-size: 15px;
    color: #111;
}

#grid th {
    height: 24px;
    line-height: 23px;
    vertical-align: top;
    font-weight: normal;
    background: linear-gradient(#e6e6e6, #b4b4b4) right / 1px 100% no-repeat #e6e6e6;
    border-bottom: 1px solid #999;
}

#grid th.current {
    background: #d2d2d2;
    color: #217346;
    border-bottom: 2px solid #217346;
    line-height: 22px;
}

#grid td {
    height: 22px;
    line-height: 20px;
    vertical-align: top;
    padding: 0 3px;
    background: #fdfdfd;
    border-right: 1px solid #d0d0d0;
    border-bottom: 1px solid #d0d0d0;
    white-space: nowrap;
}

#grid td.num {
    text-align: right;
}

#grid td.err {
    text-align: center;
}

#grid td.selected {
    position: relative;
}

.selected::before {
    content: "";
    position: absolute;
    inset: -2px;
    border: 2px solid #217346;
}

.selected::after {
    content: "";
    position: absolute;
    right: -3px;
    bottom: -3px;
    width: 6px;
    height: 6px;
    background: #217346;
    border: 1px solid #fff;
    border-width: 1px 0 0 1px;
}

.pointer {
    position: absolute;
    left: 36px;
    top: 5px;
}

.charts {
    position: absolute;
    left: 17px;
    top: 243px;
    display: flex;
    background: #fdfdfd;
    border: 1px solid #d0d0d0;
    border-right: none;
    font-family: "Liberation Sans", "Noto Sans CJK SC", sans-serif;
    font-weight: bold;
}

.charts svg {
    border-right: 1px solid #d0d0d0;
    text-anchor: middle;
}

.chart-title {
    font-size: 19px;
    fill: #595959;
}

.chart-axis {
    font-size: 16px;
    fill: #595959;
}

.chart-value {
    font-size: 16px;
    fill: #404040;
}

.vscroll {
    width: 15px;
    margin-top: 11px;
    display: flex;
    flex-direction: column;
}

.vscroll button,
.hscroll button {
    width: 15px;
    height: 15px;
    display: flex;
    align-items: center;
    justify-content: center;
    background: #fff;
    border: 1px solid #888;
}

.thumb {
    flex: 1;
    background: #fdfdfd;
    border: 1px solid #888;
}

.track {
    flex: 0 0 25px;
    background: #f0f0f0;
}

.hscroll .track {
    flex-basis: 32px;
}

.sheet-bar {
    flex: none;
    height: 27px;
    display: flex;
    font-size: 13px;
    color: #444;
}

.st {
    height: 24px;
    padding: 0 12px;
    border-right: 1px solid #999;
    line-height: 20px;
}

.first {
    margin-left: 4px;
    border-left: 1px solid #999;
    padding: 0 12px 0 10px;
}

/* covers the sheet's bottom line */
.st.active {
    position: relative;
    background: #fdfdfd;
    color: #217346;
    border-bottom: 2px solid #217346;
    margin-top: -1px;
    height: 26px;
    padding: 0 13px;
}

.add {
    margin-left: 32px;
    display: flex;
    align-self: center;
}

.sheet-bar .grip {
    margin: 0 15px 0 auto;
}

.hscroll {
    width: 40%;
    margin-right: 21px;
    align-self: center;
    display: flex;
}

/* format pane */
.pane {
    width: 189px;
    flex: none;
    margin-top: 11px;
    border-left: 1px solid #bbb;
    padding-left: 13px;
    overflow: hidden;
}

.pane h2 {
    font-size: 21px;
    font-weight: normal;
    line-height: 30px;
    margin-top: 7px;
    color: #333;
    white-space: nowrap;
}

.pane-tabs {
    display: flex;
    gap: 12px;
    margin: 12px 0 0 3px;
}

.pane-tabs button {
    width: 30px;
    height: 30px;
    display: flex;
    align-items: center;
    justify-content: center;
}

.pane-tabs .on {
    background: #c6c6c6;
}

.notch {
    display: block;
    margin-top: 6px;
}

fieldset {
    border: none;
    margin-bottom: 9px;
    padding-left: 22px;
    color: #a6a6a6;
}

legend {
    display: flex;
    align-items: center;
    gap: 6px;
    padding: 6px 0 8px;
    margin-left: -14px;
    line-height: 20px;
    font-weight: bold;
    color: #222;
}

fieldset label {
    display: flex;
    align-items: center;
    height: 25px;
    white-space: nowrap;
}

fieldset input {
    appearance: none;
    width: 12px;
    height: 12px;
    margin-right: 6px;
    border: 1px solid #c6c6c6;
    border-radius: 50%;
    background: #f0f0f0;
}

/* status bar */
.status {
    flex: none;
    height: 22px;
    display: flex;
    align-items: center;
    background: #f0f2ef;
    border-top: 1px solid #c6c6c6;
}

.access {
    margin-right: auto;
    line-height: 20px;
}

.status button {
    width: 40px;
    height: 100%;
    display: flex;
    align-items: center;
    justify-content: center;
}

.status .on {
    background: #cfcfcf;
}

.zoom {
    width: 89px;
    display: flex;
    overflow: hidden;
}

/* task bar */
.taskbar {
    flex: none;
    height: 40px;
    display: flex;
    align-items: center;
    background: #0b0b0b;
    color: #fff;
}

.bars {
    width: 4px;
    height: 18px;
    margin: 0 13px 0 6px;
    border: 1px solid #444;
    border-width: 0 1px;
}

.app {
    height: 40px;
    width: 152px;
    display: flex;
    align-items: center;
    gap: 6px;
    padding: 0 7px;
    border-bottom: 2px solid #76d3f5;
}

.app.active {
    width: 160px;
    margin-right: 5px;
    padding: 0 10px;
    gap: 4px;
    background: #3c3c3c;
}

.tray,
.input-tools {
    display: flex;
    align-items: center;
}

.tray {
    margin-left: auto;
    gap: 8px;
}

.input-tools {
    gap: 4px;
    margin-right: 2px;
}

.tray svg {
    width: 16px;
    height: 16px;
}

.tray .bars {
    margin-right: 11px;
}

.ime {
    width: 16px;
    font-size: 16px;
    line-height: 20px;
}

.ime.box {
    width: 14px;
    height: 16px;
    margin-right: 3px;
    font-size: 12px;
    line-height: 16px;
    text-align: center;
    background: #fff;
    color: #000;
}

.clock {
    width: 32px;
    height: 40px;
    display: flex;
    flex-direction: column;
    justify-content: space-around;
}

.clock span:first-child {
    text-align: right;
}
```
FILE: script.js
```js
const columns = [
    ["A", 18], ["B", 80], ["C", 40], ["D", 40], ["E", 38], ["F", 38], ["G", 39], ["H", 39],
    ["I", 40], ["J", 40], ["K", 38], ["L", 38], ["M", 80], ["N", 80], ["O", 80], ["P", 80],
    ["Q", 80], ["R", 80], ["S", 80], ["T", 80], ["U", 80], ["V", 80], ["W", 80], ["X", 80],
    ["Y", 80]
];

const levels = ["A级", "B级", "C级", "D级", "S级"];
const regions = ["北区", "南区", "中区", "西区", "东区"];

// one row per region, Q2 and Q3 for each level
const counts = [
    [2, 3, 16, 15, 9, 6, 1, 3, 0, 1],
    [1, 0, 8, 10, 6, 4, 0, 0, 0, 1],
    [3, 2, 3, 4, 3, 1, 0, 2, 1, 1],
    [1, 2, 8, 5, 5, 7, 1, 1, 0, 0],
    [1, 4, 14, 9, 9, 9, 1, 3, 0, 0]
];

const points = [
    [2.3, 1.5, 7.5],
    [2.3, "#N/A", 20],
    [2.3, 4, 27],
    [2.3, 6, 31.5],
    [2.3, 9, 38.5]
];

const cells = {};
for (let i = 0; i < 10; i++) {
    const col = columns[i + 2][0];
    cells[col + 3] = levels[Math.floor(i / 2)];
    cells[col + 4] = i % 2 ? "Q3" : "Q2";
}
["X1", "Y1", "Y2", "Y3", "Y4", "Y5"].forEach((t, i) => cells["OPQRST"[i] + 4] = t);
regions.forEach((name, r) => {
    cells["B" + (r + 5)] = name;
    counts[r].forEach((v, i) => cells[columns[i + 2][0] + (r + 5)] = v);
    points[r].forEach((v, i) => cells["OPQ"[i] + (r + 5)] = v);
});

const pointer = `<svg class="pointer" width="16" height="17" viewBox="0 0 16 17">
    <path d="M5.500 1.500h5v4h4v5h-4v4h-5v-4h-4v-5h4z" fill="#fff" stroke="#000" stroke-width="1.500"/></svg>`;

// the last column has no width of its own and fills a wider window
let html = "<colgroup>" + columns.map(c => `<col style="width:${c[1]}px">`).join("") + "<col></colgroup><thead><tr>";
columns.forEach(([name]) => {
    html += `<th${name === "R" ? ' class="current"' : ""}>${name === "A" ? "" : name}</th>`;
});
html += "<th></th></tr></thead><tbody>";
for (let row = 1; row <= 60; row++) {
    html += "<tr>";
    columns.forEach(([name]) => {
        const value = cells[name + row];
        if (name + row === "R5") {
            html += `<td class="selected">${pointer}</td>`;
        } else if (value === undefined) {
            html += "<td></td>";
        } else {
            const cls = value === "#N/A" ? "err" : typeof value === "number" ? "num" : "txt";
            html += `<td class="${cls}">${value}</td>`;
        }
    });
    html += "<td></td></tr>";
}
document.getElementById("grid").innerHTML = html + "</tbody>";

// stacked columns with connector lines between Q2 and Q3
const colors = ["#4472c4", "#ed7d31", "#a5a5a5", "#ffc000", "#5b9bd5"];
const units = [28.7, 5.75, 9.84, 34.4, 98.3];
const widths = [198, 198, 196, 196, 198];
const base = 403;

function drawChart(level) {
    const unit = units[level];
    const w = widths[level];
    let bars = "", lines = "", labels = "";
    let left = base, right = base;
    for (let r = 0; r < 5; r++) {
        const a = counts[r][level * 2], b = counts[r][level * 2 + 1];
        const ha = a * unit, hb = b * unit;
        left -= ha;
        right -= hb;
        bars += `<rect x="28" y="${left}" width="56" height="${ha}" fill="${colors[r]}"/>`;
        bars += `<rect x="112" y="${right}" width="56" height="${hb}" fill="${colors[r]}"/>`;
        lines += `<path d="M84 ${left}L112 ${right}" stroke="#a6a6a6"/>`;
        labels += `<text class="chart-value" x="56" y="${left + ha / 2 + 6}">${a}</text>`;
        labels += `<text class="chart-value" x="140" y="${right + hb / 2 + 6}">${b}</text>`;
    }
    return `<svg width="${w}" height="439">
        <text class="chart-title" x="${w / 2}" y="33">${levels[level]}</text>
        ${lines}${bars}${labels}
        <text class="chart-axis" x="56" y="426">Q2</text>
        <text class="chart-axis" x="140" y="426">Q3</text></svg>`;
}

document.getElementById("charts").innerHTML = levels.map((_, i) => drawChart(i)).join("");
```
